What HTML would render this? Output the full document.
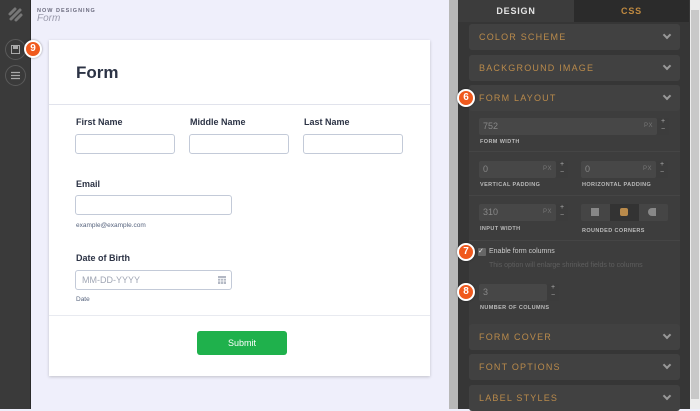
<!DOCTYPE html><html><head><meta charset="utf-8"><style>
*{box-sizing:border-box;margin:0;padding:0}
body{width:700px;height:409px;overflow:hidden;position:relative;background:#efeffb;font-family:"Liberation Sans",sans-serif}
.a{position:absolute}
.side{left:0;top:0;width:31px;height:409px;background:#3a3a3a;border-right:1px solid #2a2a2a}
.circ{width:21px;height:21px;border:1px solid #5a5a5a;border-radius:50%}
.card{left:49px;top:40px;width:381px;height:336px;background:#fff;box-shadow:0 1px 3px rgba(0,0,0,.2)}
.lbl{font-size:9px;color:#2c3345;font-weight:bold;-webkit-text-stroke:0}
.inp{border:1px solid #c3cad8;border-radius:3px;height:20px;background:#fff}
.sub{font-size:6.5px;color:#57647e}
.panel{left:458px;top:0;width:232px;height:409px;background:#363636}
.sec{left:469px;width:211px;height:26px;background:#414141;border-radius:3px;color:#b98a4b;font-size:9px;letter-spacing:1.2px;padding:8px 0 0 10px}
.chev{position:absolute;right:10px;top:8px;width:6px;height:6px;border-right:2px solid #999;border-bottom:2px solid #999;transform:rotate(45deg)}
.fld{height:17px;background:#474747;border-radius:2px;color:#888;font-size:9px;padding:3px 0 0 4px}
.px{position:absolute;right:4px;top:5px;font-size:6px;color:#777;letter-spacing:.5px}
.pm{width:12px;height:17px;background:#3c3c3c;color:#aaa;font-size:7px;line-height:8px;text-align:center}
.cap{font-size:5.5px;color:#bbb;letter-spacing:.4px;font-weight:bold}
.badge{width:18px;height:18px;border-radius:50%;background:#f05a1e;border:2px solid #fff;color:#fff;font-size:10px;font-weight:bold;text-align:center;line-height:14px;box-shadow:0 0 2px rgba(0,0,0,.4)}
.sb{background:#b8b8b8}
</style></head><body>
<div class="a side"></div>
<svg class="a" style="left:7px;top:6px" width="17" height="17" viewBox="0 0 17 17"><g stroke="#777" stroke-width="3" stroke-linecap="round"><path d="M3 8 L8 3"/><path d="M4 13 L13 4"/><path d="M9 14 L14 9"/></g></svg>
<div class="a circ" style="left:5px;top:39px"></div>
<svg class="a" style="left:11px;top:45px" width="9" height="9" viewBox="0 0 9 9"><rect x=".5" y=".5" width="8" height="8" fill="none" stroke="#aaa"/><rect x="2" y="1" width="5" height="3" fill="#aaa"/></svg>
<div class="a circ" style="left:5px;top:65px"></div>
<svg class="a" style="left:10px;top:71px" width="11" height="9"><g stroke="#aaa" stroke-width="1.3"><path d="M1 1.5H10M1 4.5H10M1 7.5H10"/></g></svg>
<div class="a badge" style="left:24px;top:40px">9</div>
<div class="a" style="left:37px;top:8px;font-size:5.5px;letter-spacing:1px;color:#6d6d80;font-weight:bold">NOW DESIGNING</div>
<div class="a" style="left:37px;top:13px;font-size:10px;color:#9a9aac;font-style:italic">Form</div>
<div class="a card">
<div class="a" style="left:27px;top:23px;font-size:17px;color:#2c3345;font-weight:bold">Form</div>
<div class="a" style="left:0;top:64px;width:381px;height:1px;background:#e1e3ec"></div>
<div class="a lbl" style="left:27px;top:77px">First Name</div>
<div class="a lbl" style="left:141px;top:77px">Middle Name</div>
<div class="a lbl" style="left:255px;top:77px">Last Name</div>
<div class="a inp" style="left:26px;top:94px;width:100px"></div>
<div class="a inp" style="left:140px;top:94px;width:100px"></div>
<div class="a inp" style="left:254px;top:94px;width:100px"></div>
<div class="a lbl" style="left:27px;top:139px">Email</div>
<div class="a inp" style="left:26px;top:155px;width:157px"></div>
<div class="a sub" style="left:27px;top:182px">example@example.com</div>
<div class="a lbl" style="left:27px;top:213px">Date of Birth</div>
<div class="a inp" style="left:26px;top:230px;width:157px;font-size:9px;color:#a0a6b4;padding:4px 0 0 6px">MM-DD-YYYY</div>
<svg class="a" style="left:169px;top:236px" width="8" height="8"><rect width="8" height="8" fill="#b3b8c4"/><path d="M0 2.5H8M0 5H8M2.7 2.5V8M5.3 2.5V8" stroke="#fff" stroke-width=".7"/></svg>
<div class="a sub" style="left:27px;top:256px">Date</div>
<div class="a" style="left:0;top:275px;width:381px;height:1px;background:#e8eaf0"></div>
<div class="a" style="left:148px;top:291px;width:90px;height:24px;background:#1fb14c;border-radius:3px;color:#fff;font-size:9px;text-align:center;line-height:24px">Submit</div>
</div>
<div class="a sb" style="left:449px;top:0;width:9px;height:409px"></div>
<div class="a panel"></div>
<div class="a" style="left:458px;top:0;width:116px;height:22px;background:#3c3c3c;color:#e4e4e4;font-size:9px;font-weight:bold;letter-spacing:.8px;text-align:center;line-height:22px">DESIGN</div>
<div class="a" style="left:574px;top:0;width:115px;height:22px;background:#2b2b2b;color:#c08a40;font-size:9px;font-weight:bold;letter-spacing:.8px;text-align:center;line-height:22px">CSS</div>
<div class="a sec" style="top:24px">COLOR SCHEME<div class="chev"></div></div>
<div class="a sec" style="top:55px">BACKGROUND IMAGE<div class="chev"></div></div>
<div class="a" style="left:469px;top:85px;width:211px;height:244px;background:#3d3d3d;border-radius:3px"></div>
<div class="a sec" style="top:85px;background:#414141">FORM LAYOUT<div class="chev"></div></div>
<div class="a fld" style="left:479px;top:118px;width:178px">752<span class="px">PX</span></div>
<div class="a pm" style="left:657px;top:118px">+<br>−</div>
<div class="a cap" style="left:480px;top:139px">FORM WIDTH</div>
<div class="a" style="left:469px;top:151px;width:211px;height:1px;background:#454545"></div>
<div class="a fld" style="left:479px;top:161px;width:77px">0<span class="px">PX</span></div>
<div class="a pm" style="left:556px;top:161px">+<br>−</div>
<div class="a fld" style="left:581px;top:161px;width:75px">0<span class="px">PX</span></div>
<div class="a pm" style="left:656px;top:161px">+<br>−</div>
<div class="a cap" style="left:480px;top:182px">VERTICAL PADDING</div>
<div class="a cap" style="left:582px;top:182px">HORIZONTAL PADDING</div>
<div class="a" style="left:469px;top:195px;width:211px;height:1px;background:#454545"></div>
<div class="a fld" style="left:479px;top:204px;width:77px">310<span class="px">PX</span></div>
<div class="a pm" style="left:556px;top:204px">+<br>−</div>
<div class="a" style="left:581px;top:204px;width:87px;height:17px;background:#454545;border-radius:2px"></div>
<div class="a" style="left:610px;top:204px;width:29px;height:17px;background:#333"></div>
<div class="a" style="left:591px;top:208px;width:8px;height:8px;background:#888"></div>
<div class="a" style="left:620px;top:208px;width:8px;height:8px;background:#b98a4b;border-radius:2px"></div>
<div class="a" style="left:648px;top:208px;width:8px;height:8px;background:#888;border-radius:4px 0 0 4px"></div>
<div class="a cap" style="left:480px;top:226px">INPUT WIDTH</div>
<div class="a cap" style="left:582px;top:228px">ROUNDED CORNERS</div>
<div class="a" style="left:469px;top:240px;width:211px;height:1px;background:#454545"></div>
<div class="a" style="left:478px;top:248px;width:8px;height:8px;background:#666;border-radius:1px;color:#eee;font-size:7px;line-height:8px">✓</div>
<div class="a" style="left:489px;top:248px;font-size:7px;color:#ccc">Enable form columns</div>
<div class="a" style="left:489px;top:262px;font-size:7px;color:#5e5e5e">This option will enlarge shrinked fields to columns</div>
<div class="a fld" style="left:479px;top:284px;width:68px">3</div>
<div class="a pm" style="left:547px;top:284px">+<br>−</div>
<div class="a cap" style="left:480px;top:305px">NUMBER OF COLUMNS</div>
<div class="a sec" style="top:324px">FORM COVER<div class="chev"></div></div>
<div class="a sec" style="top:354px">FONT OPTIONS<div class="chev"></div></div>
<div class="a sec" style="top:385px">LABEL STYLES<div class="chev"></div></div>
<div class="a badge" style="left:457px;top:89px">6</div>
<div class="a badge" style="left:457px;top:243px">7</div>
<div class="a badge" style="left:457px;top:283px">8</div>
<div class="a sb" style="left:690px;top:0;width:10px;height:409px;background:#ececec"></div>
<div class="a" style="left:691px;top:10px;width:8px;height:389px;background:#c8c8c8"></div>
</body></html>
